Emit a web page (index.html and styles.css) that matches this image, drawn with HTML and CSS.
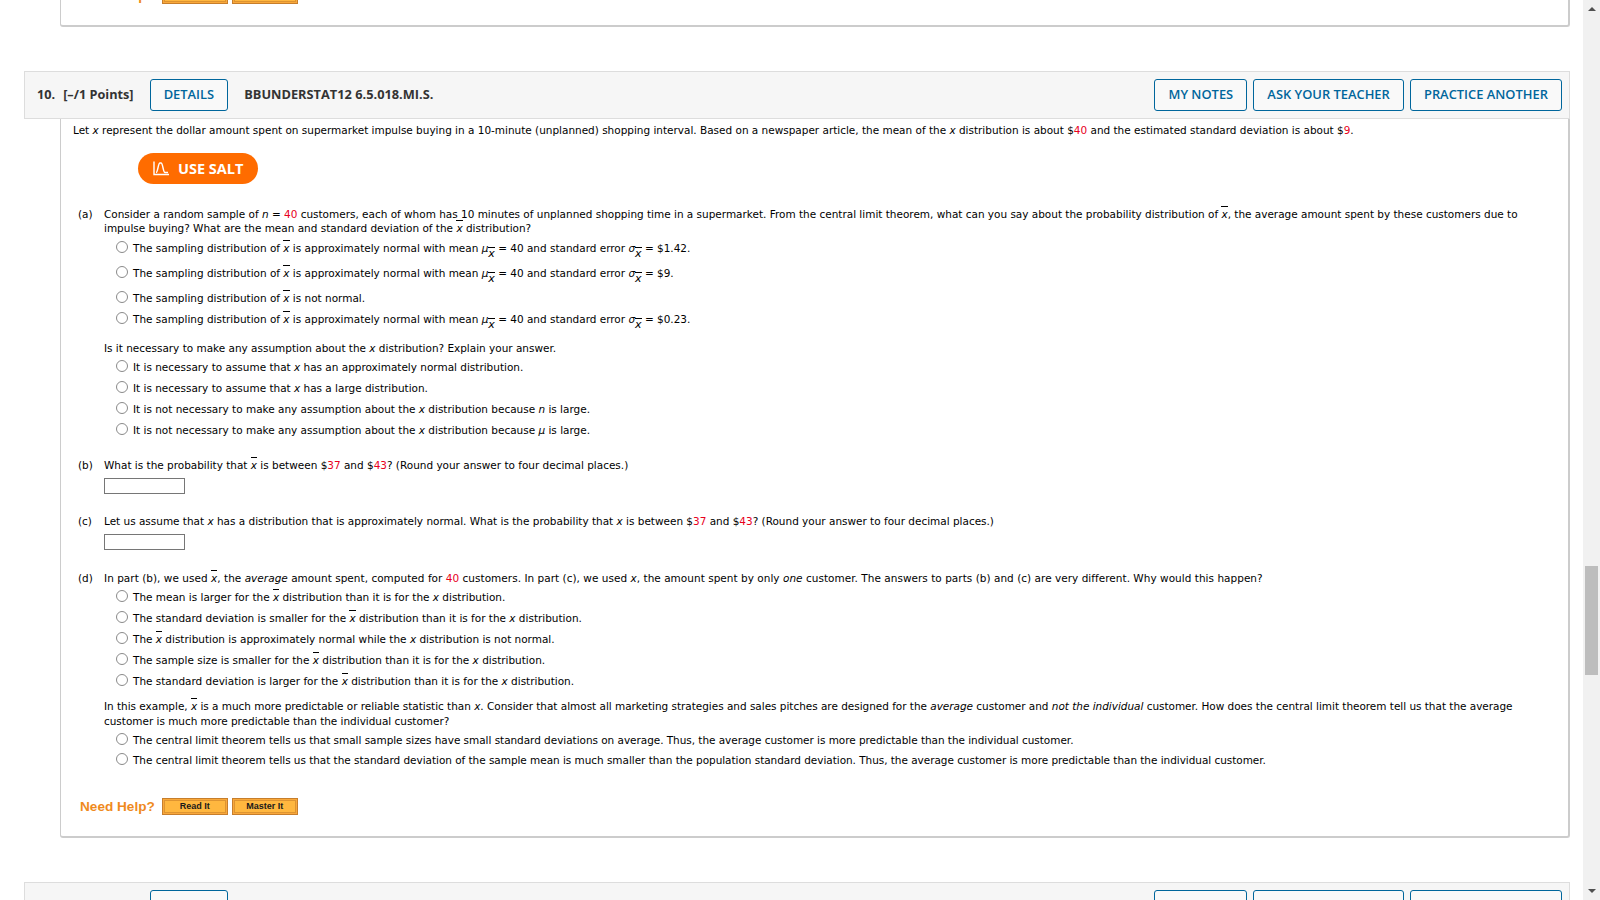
FILE: index.html
```html
<!DOCTYPE html>
<html lang="en">

<head>
    <meta charset="UTF-8" />
    <title>Question 10</title>
    <link rel="stylesheet" href="styles.css">
</head>

<body>
    <div class="page">
        <main class="content">
            <section class="prev-card">
                <div class="help prev-help">
                    <span class="need-help">Need Help?</span>
                    <a class="help-btn">Read It</a>
                    <a class="help-btn">Master It</a>
                </div>
            </section>

            <section class="question">
                <header class="q-head">
                    <span class="q-num">10.</span>
                    <span class="q-points">[&ndash;/1 Points]</span>
                    <a class="btn details">DETAILS</a>
                    <span class="q-code">BBUNDERSTAT12 6.5.018.MI.S.</span>
                    <div class="q-actions">
                        <a class="btn">MY NOTES</a>
                        <a class="btn">ASK YOUR TEACHER</a>
                        <a class="btn">PRACTICE ANOTHER</a>
                    </div>
                </header>
                <div class="q-body">
                    <p class="intro">Let <i>x</i> represent the dollar amount spent on supermarket impulse buying in a 10-minute (unplanned) shopping interval. Based on a newspaper article, the mean of the <i>x</i> distribution is about $<span class="red">40</span> and the estimated standard deviation is about $<span class="red">9</span>.</p>
                    <a class="salt">
                        <svg class="salt-icon" viewBox="0 0 16 15" width="16" height="15">
                            <path d="M1 0.5V13.500H16" fill="none" stroke="#fff" stroke-width="1.400" />
                            <path d="M3 11.500c2 0 2-9.500 4-9.500h1c2 0 2 9.500 4 9.500h3" fill="none" stroke="#fff" stroke-width="1.400" />
                        </svg>
                        USE SALT
                    </a>

                    <div class="part part-a">
                        <span class="part-label">(a)</span>
                        <div class="part-text">
                            <p>Consider a random sample of <i>n</i> = <span class="red">40</span> customers, each of whom has 10 minutes of unplanned shopping time in a supermarket. From the central limit theorem, what can you say about the probability distribution of <span class="xbar">x</span>, the average amount spent by these customers due to impulse buying? What are the mean and standard deviation of the <span class="xbar">x</span> distribution?</p>
                            <ul class="choices first">
                                <li class="tall"><input type="radio" name="a1"><span>The sampling distribution of <span class="xbar">x</span> is approximately normal with mean <i>&mu;</i><sub class="xbar">x</sub> = 40 and standard error <i>&sigma;</i><sub class="xbar">x</sub> = $1.42.</span></li>
                                <li class="tall"><input type="radio" name="a1"><span>The sampling distribution of <span class="xbar">x</span> is approximately normal with mean <i>&mu;</i><sub class="xbar">x</sub> = 40 and standard error <i>&sigma;</i><sub class="xbar">x</sub> = $9.</span></li>
                                <li><input type="radio" name="a1"><span>The sampling distribution of <span class="xbar">x</span> is not normal.</span></li>
                                <li><input type="radio" name="a1"><span>The sampling distribution of <span class="xbar">x</span> is approximately normal with mean <i>&mu;</i><sub class="xbar">x</sub> = 40 and standard error <i>&sigma;</i><sub class="xbar">x</sub> = $0.23.</span></li>
                            </ul>
                            <p class="sub-q">Is it necessary to make any assumption about the <i>x</i> distribution? Explain your answer.</p>
                            <ul class="choices">
                                <li><input type="radio" name="a2"><span>It is necessary to assume that <i>x</i> has an approximately normal distribution.</span></li>
                                <li><input type="radio" name="a2"><span>It is necessary to assume that <i>x</i> has a large distribution.</span></li>
                                <li><input type="radio" name="a2"><span>It is not necessary to make any assumption about the <i>x</i> distribution because <i>n</i> is large.</span></li>
                                <li><input type="radio" name="a2"><span>It is not necessary to make any assumption about the <i>x</i> distribution because <i>&mu;</i> is large.</span></li>
                            </ul>
                        </div>
                    </div>

                    <div class="part part-b">
                        <span class="part-label">(b)</span>
                        <div class="part-text">
                            <p>What is the probability that <span class="xbar">x</span> is between $<span class="red">37</span> and $<span class="red">43</span>? (Round your answer to four decimal places.)</p>
                            <input class="answer" type="text">
                        </div>
                    </div>

                    <div class="part part-c">
                        <span class="part-label">(c)</span>
                        <div class="part-text">
                            <p>Let us assume that <i>x</i> has a distribution that is approximately normal. What is the probability that <i>x</i> is between $<span class="red">37</span> and $<span class="red">43</span>? (Round your answer to four decimal places.)</p>
                            <input class="answer" type="text">
                        </div>
                    </div>

                    <div class="part part-d">
                        <span class="part-label">(d)</span>
                        <div class="part-text">
                            <p class="wide">In part (b), we used <span class="xbar">x</span>, the <i>average</i> amount spent, computed for <span class="red">40</span> customers. In part (c), we used <i>x</i>, the amount spent by only <i>one</i> customer. The answers to parts (b) and (c) are very different. Why would this happen?</p>
                            <ul class="choices after-d">
                                <li><input type="radio" name="d1"><span>The mean is larger for the <span class="xbar">x</span> distribution than it is for the <i>x</i> distribution.</span></li>
                                <li><input type="radio" name="d1"><span>The standard deviation is smaller for the <span class="xbar">x</span> distribution than it is for the <i>x</i> distribution.</span></li>
                                <li><input type="radio" name="d1"><span>The <span class="xbar">x</span> distribution is approximately normal while the <i>x</i> distribution is not normal.</span></li>
                                <li><input type="radio" name="d1"><span>The sample size is smaller for the <span class="xbar">x</span> distribution than it is for the <i>x</i> distribution.</span></li>
                                <li><input type="radio" name="d1"><span>The standard deviation is larger for the <span class="xbar">x</span> distribution than it is for the <i>x</i> distribution.</span></li>
                            </ul>
                            <p class="sub-q long">In this example, <span class="xbar">x</span> is a much more predictable or reliable statistic than <i>x</i>. Consider that almost all marketing strategies and sales pitches are designed for the <i>average</i> customer and <i>not the individual</i> customer. How does the central limit theorem tell us that the average customer is much more predictable than the individual customer?</p>
                            <ul class="choices tight">
                                <li><input type="radio" name="d2"><span>The central limit theorem tells us that small sample sizes have small standard deviations on average. Thus, the average customer is more predictable than the individual customer.</span></li>
                                <li><input type="radio" name="d2"><span>The central limit theorem tells us that the standard deviation of the sample mean is much smaller than the population standard deviation. Thus, the average customer is more predictable than the individual customer.</span></li>
                            </ul>
                        </div>
                    </div>

                    <div class="help">
                        <span class="need-help">Need Help?</span>
                        <a class="help-btn">Read It</a>
                        <a class="help-btn">Master It</a>
                    </div>
                </div>
            </section>

            <section class="question next">
                <header class="q-head">
                    <span class="q-num">11.</span>
                    <span class="q-points">[&ndash;/1 Points]</span>
                    <a class="btn details">DETAILS</a>
                    <div class="q-actions">
                        <a class="btn">MY NOTES</a>
                        <a class="btn">ASK YOUR TEACHER</a>
                        <a class="btn">PRACTICE ANOTHER</a>
                    </div>
                </header>
            </section>
        </main>

        <div class="scrollbar">
            <span class="arrow up"></span>
            <div class="track"><div class="thumb"></div></div>
            <span class="arrow down"></span>
        </div>
    </div>
</body>

</html>
```

FILE: styles.css
```css
* {
    padding: 0;
    margin: 0;
    box-sizing: border-box;
}

html, body {
    height: 100%;
    overflow: hidden;
}

body {
    font-family: "DejaVu Sans", Verdana, sans-serif;
    font-size: 10.47px;
    line-height: 14px;
    color: #000;
    background-color: #fff;
}

.page {
    display: flex;
    height: 900px;
    overflow: hidden;
}

.content {
    flex: 1;
    min-width: 0;
    padding-right: 13px;
}

.red {
    color: #e8001c;
}

/* previous question, only its bottom shows */
.prev-card {
    height: 27px;
    margin-left: 60px;
    margin-bottom: 44px;
    border: 1px solid #ccc;
    border-width: 0 2px 2px 1px;
    border-radius: 0 0 3px 3px;
    overflow: hidden;
}

.question {
    margin-left: 24px;
}

.q-head {
    display: flex;
    align-items: center;
    height: 48px;
    padding: 0 7px 0 12px;
    font-family: "Open Sans", sans-serif;
    font-size: 12.700px;
    font-weight: 700;
    color: #333;
    background-color: #f6f6f6;
    border: 1px solid #ddd;
}

.q-num,
.q-points,
.q-code {
    padding-bottom: 2px;
}

.q-num {
    margin-right: 8px;
}

.q-code {
    font-size: 12.800px;
}

.details {
    margin-left: 16px;
    margin-right: 16px;
}

.q-actions {
    display: flex;
    gap: 6px;
    margin-left: auto;
}

.btn {
    display: flex;
    align-items: center;
    justify-content: center;
    height: 32px;
    padding: 0 13.100px 2px;
    font-size: 12.900px;
    color: #00669c;
    font-weight: 600;
    background-color: #f9f9f9;
    border: 1px solid #00669c;
    border-radius: 3px;
}

.q-body {
    margin-left: 36px;
    height: 719px;
    padding: 4px 0 0 12px;
    border: 1px solid #ccc;
    border-width: 0 2px 2px 1px;
    border-radius: 0 0 3px 3px;
}

.salt {
    display: inline-flex;
    align-items: center;
    gap: 9px;
    height: 31px;
    margin: 16px 0 0 65px;
    padding: 0 15px;
    font-family: "Open Sans", sans-serif;
    font-size: 14.500px;
    font-weight: 700;
    color: #fff;
    background-color: #ff6c00;
    border-radius: 16px;
}

.part {
    display: flex;
    padding-left: 5px;
}

.part-a {
    margin-top: 23px;
}

.part-b {
    margin-top: 14px;
}

.part-c {
    margin-top: 20px;
}

.part-d {
    margin-top: 21px;
}

.part-label {
    width: 26px;
    flex-shrink: 0;
}

.part-text {
    flex: 1;
    padding-right: 40px;
}

.wide {
    letter-spacing: 0.04px;
}

.choices {
    list-style: none;
    margin-left: 12px;
}

.choices.first {
    margin-top: 6px;
}

.choices.after-d {
    margin-top: 5px;
}

.choices li {
    display: flex;
    align-items: flex-start;
    gap: 5px;
    height: 21px;
}

.choices li.tall {
    height: 25px;
}

.choices.tight {
    letter-spacing: -0.03px;
}

.choices.tight li {
    height: 20px;
}

.choices input {
    appearance: none;
    width: 12px;
    height: 12px;
    flex-shrink: 0;
    background: #fff;
    border: 1px solid #8a8a8a;
    border-radius: 50%;
}

.sub-q {
    margin-top: 8px;
    margin-bottom: 5px;
}

.sub-q.long {
    margin-top: 4px;
    margin-bottom: 4px;
    line-height: 15px;
    letter-spacing: -0.015px;
}

.answer {
    display: block;
    width: 81px;
    height: 16px;
    margin-top: 6px;
    background: #fff;
    border: 1px solid #767676;
}

/* x with a bar lifted over it */
.xbar {
    position: relative;
    font-style: italic;
}

.xbar::before {
    content: "";
    position: absolute;
    top: -2px;
    left: 0;
    right: 0;
    height: 1px;
    background-color: #000;
}

sub.xbar {
    font-size: 11px;
    line-height: 0;
    vertical-align: -5px;
}

sub.xbar::before {
    top: 0;
}

.help {
    display: flex;
    align-items: center;
    gap: 4px;
    margin: 25px 0 0 7px;
}

.prev-help {
    margin: -13px 0 0 19px;
}

.need-help {
    margin-right: 3px;
    font-family: "Liberation Sans", Arial, sans-serif;
    font-size: 13.600px;
    font-weight: 700;
    color: #ef8a1d;
}

.help-btn {
    width: 66px;
    height: 17px;
    font-family: "Liberation Sans", Arial, sans-serif;
    font-size: 9px;
    line-height: 15px;
    font-weight: 700;
    text-align: center;
    color: #1a1a1a;
    background-color: #ffb73f;
    border: 1px solid #c77e2b;
    box-shadow: inset 0 0 0 1px #f9a83b, inset 0 0 0 2px #de9431;
}

.next {
    margin-top: 44px;
}

.scrollbar {
    display: flex;
    flex-direction: column;
    align-items: center;
    width: 17px;
    flex-shrink: 0;
    background-color: #f1f1f1;
}

.arrow {
    width: 0;
    height: 0;
    margin: 7px 0;
    border-left: 4px solid transparent;
    border-right: 4px solid transparent;
}

.arrow.up {
    border-bottom: 4px solid #505050;
}

.arrow.down {
    border-top: 4px solid #505050;
}

.track {
    flex: 1;
    width: 100%;
    padding: 0 2px;
}

.thumb {
    height: 109px;
    margin-top: 548px;
    background-color: #bdbdbd;
}
```
